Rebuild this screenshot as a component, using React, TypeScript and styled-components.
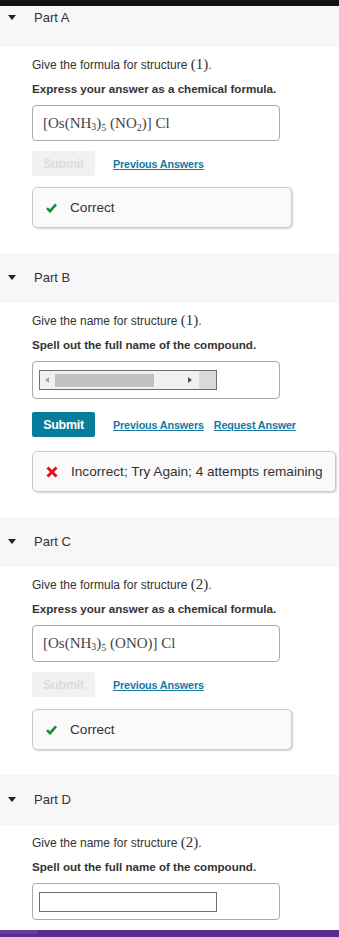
import React from "react";
import styled, { createGlobalStyle } from "styled-components";

const GlobalStyle = createGlobalStyle`
  html, body {
    margin: 0;
    padding: 0;
    background: #fff;
  }
  body {
    font-family: "Liberation Sans", Arial, sans-serif;
    color: #333;
    overflow: hidden;
  }
`;

const Page = styled.div`
  width: 339px;
  display: flex;
  flex-direction: column;
`;

const TopBar = styled.div`
  height: 6px;
  background: #121212;
`;

const Section = styled.section<{ $pb?: number }>`
  display: flex;
  flex-direction: column;
  padding-bottom: ${(p) => p.$pb ?? 25}px;
`;

const PartHeader = styled.div<{ $cut?: boolean }>`
  height: ${(p) => (p.$cut ? 41 : 50)}px;
  background: #f7f7f7;
  display: flex;
  align-items: ${(p) => (p.$cut ? "flex-start" : "center")};
  padding-top: ${(p) => (p.$cut ? 3 : 0)}px;
  box-sizing: border-box;
  padding-left: 8px;
  gap: 18px;
`;

const CaretWrap = styled.span`
  display: flex;
  height: 18px;
  align-items: center;
`;

const Caret = styled.span`
  width: 0;
  height: 0;
  border-left: 4.5px solid transparent;
  border-right: 4.5px solid transparent;
  border-top: 5px solid #222;
  margin-bottom: 1px;
`;

const PartTitle = styled.span`
  font-size: 13px;
  line-height: 18px;
  color: #333;
`;

const Body = styled.div`
  display: flex;
  flex-direction: column;
  align-items: flex-start;
  padding: 9px 0 0 32px;
`;

const Prompt = styled.p`
  margin: 0;
  font-size: 12px;
  line-height: 16px;
  color: #333;
`;

const Num = styled.span`
  font-family: "Liberation Serif", "Times New Roman", serif;
  font-size: 15px;
`;

const Instruction = styled.p`
  margin: 8px 0 0;
  font-size: 11.6px;
  line-height: 16px;
  font-weight: bold;
  color: #333;
`;

const AnswerBox = styled.div<{ $h?: number }>`
  margin-top: 8px;
  width: 248px;
  height: ${(p) => p.$h ?? 37}px;
  box-sizing: border-box;
  border: 1px solid #aaa;
  border-radius: 4px;
  background: #fff;
  display: flex;
  align-items: center;
  padding-left: 10px;
`;

const ChemFormula = styled.span`
  font-family: "Liberation Serif", "Times New Roman", serif;
  font-size: 15px;
  color: #444;
  sub {
    font-size: 10px;
    vertical-align: -2px;
    line-height: 0;
  }
  sub + sub {
    vertical-align: -3px;
  }
`;

const NameField = styled.div<{ $filled?: boolean }>`
  margin-left: -4px;
  width: 178px;
  height: 20px;
  box-sizing: border-box;
  border: 1px solid #6e6e6e;
  background: ${(p) => (p.$filled ? "#f0f0f0" : "#fff")};
  display: flex;
  align-items: center;
`;

const ScrollArrow = styled.span<{ $dir: "left" | "right"; $dim?: boolean }>`
  width: 0;
  height: 0;
  border-top: 3.5px solid transparent;
  border-bottom: 3.5px solid transparent;
  ${(p) =>
    p.$dir === "left"
      ? `border-right: 4px solid ${p.$dim ? "#a3a3a3" : "#505050"}; margin: 0 6px 0 5px;`
      : `border-left: 4px solid ${p.$dim ? "#a3a3a3" : "#505050"}; margin: 0 7px 0 0;`}
`;

const ScrollThumb = styled.span`
  width: 99px;
  height: 13px;
  background: #c1c1c1;
`;

const ScrollSpacer = styled.span`
  flex: 1;
`;

const ScrollCorner = styled.span`
  width: 17px;
  height: 18px;
  background: #dadada;
`;

const Actions = styled.div<{ $mt?: number }>`
  margin-top: ${(p) => p.$mt ?? 10}px;
  display: flex;
  align-items: center;
`;

const SubmitButton = styled.button<{ $active?: boolean }>`
  width: 63px;
  height: 25px;
  border: none;
  border-radius: 2px;
  font-family: "Liberation Sans", Arial, sans-serif;
  font-size: 12.5px;
  font-weight: bold;
  letter-spacing: -0.3px;
  padding: 0;
  background: ${(p) => (p.$active ? "#087d9b" : "#f1f1f1")};
  color: ${(p) => (p.$active ? "#fff" : "#dcdcdc")};
  margin-right: 18px;
`;

const LinkText = styled.a`
  font-size: 10.8px;
  font-weight: bold;
  letter-spacing: -0.15px;
  color: #1379a3;
  text-decoration: underline;
  margin-right: 10px;
  cursor: pointer;
`;

const Feedback = styled.div<{ $mt?: number }>`
  margin-top: ${(p) => p.$mt ?? 11}px;
  min-width: 260px;
  height: 41px;
  box-sizing: border-box;
  border: 1px solid #cbcbcb;
  border-radius: 5px;
  background: #fafafa;
  box-shadow: 1px 1px 2px rgba(0, 0, 0, 0.18);
  display: flex;
  align-items: center;
  padding: 0 12px 0 13px;
  gap: 13px;
`;

const FeedbackText = styled.span`
  font-size: 13.6px;
  color: #333;
`;

const BottomBar = styled.div`
  margin-top: 10px;
  height: 7px;
  background: #5a2a90;
  display: flex;
  align-items: flex-start;
`;

const BottomTab = styled.span`
  width: 38px;
  height: 4px;
  background: #6a3d9c;
  border-radius: 0 0 6px 0;
`;

const CheckIcon = () => (
  <svg width="11" height="10" viewBox="0 0 11 10">
    <path d="M1 5.2 L4 8.2 L10 1.4" fill="none" stroke="#1c8a3c" strokeWidth="2.6" />
  </svg>
);

const CrossIcon = () => (
  <svg width="12" height="12" viewBox="0 0 12 12">
    <path d="M1.5 1.5 L10.5 10.5 M10.5 1.5 L1.5 10.5" stroke="#e0161f" strokeWidth="3" />
  </svg>
);

const Formula1 = () => (
  <ChemFormula>
    [Os(NH<sub>3</sub>)<sub>5</sub> (NO<sub>2</sub>)] Cl
  </ChemFormula>
);

const Formula2 = () => (
  <ChemFormula>
    [Os(NH<sub>3</sub>)<sub>5</sub> (ONO)] Cl
  </ChemFormula>
);

function Header({ label, cut }: { label: string; cut?: boolean }) {
  return (
    <PartHeader $cut={cut}>
      <CaretWrap>
        <Caret />
      </CaretWrap>
      <PartTitle>{label}</PartTitle>
    </PartHeader>
  );
}

export default function App() {
  return (
    <>
      <GlobalStyle />
      <Page>
        <TopBar />

        <Section>
          <Header label="Part A" cut />
          <Body>
            <Prompt>
              Give the formula for structure <Num>(1)</Num>.
            </Prompt>
            <Instruction>Express your answer as a chemical formula.</Instruction>
            <AnswerBox $h={36}>
              <Formula1 />
            </AnswerBox>
            <Actions>
              <SubmitButton disabled>Submit</SubmitButton>
              <LinkText>Previous Answers</LinkText>
            </Actions>
            <Feedback>
              <CheckIcon />
              <FeedbackText>Correct</FeedbackText>
            </Feedback>
          </Body>
        </Section>

        <Section>
          <Header label="Part B" />
          <Body>
            <Prompt>
              Give the name for structure <Num>(1)</Num>.
            </Prompt>
            <Instruction>Spell out the full name of the compound.</Instruction>
            <AnswerBox $h={38}>
              <NameField $filled>
                <ScrollArrow $dir="left" $dim />
                <ScrollThumb />
                <ScrollSpacer />
                <ScrollArrow $dir="right" />
                <ScrollCorner />
              </NameField>
            </AnswerBox>
            <Actions $mt={13}>
              <SubmitButton $active>Submit</SubmitButton>
              <LinkText>Previous Answers</LinkText>
              <LinkText>Request Answer</LinkText>
            </Actions>
            <Feedback $mt={14}>
              <CrossIcon />
              <FeedbackText>Incorrect; Try Again; 4 attempts remaining</FeedbackText>
            </Feedback>
          </Body>
        </Section>

        <Section>
          <Header label="Part C" />
          <Body>
            <Prompt>
              Give the formula for structure <Num>(2)</Num>.
            </Prompt>
            <Instruction>Express your answer as a chemical formula.</Instruction>
            <AnswerBox>
              <Formula2 />
            </AnswerBox>
            <Actions>
              <SubmitButton disabled>Submit</SubmitButton>
              <LinkText>Previous Answers</LinkText>
            </Actions>
            <Feedback $mt={12}>
              <CheckIcon />
              <FeedbackText>Correct</FeedbackText>
            </Feedback>
          </Body>
        </Section>

        <Section $pb={0}>
          <Header label="Part D" />
          <Body>
            <Prompt>
              Give the name for structure <Num>(2)</Num>.
            </Prompt>
            <Instruction>Spell out the full name of the compound.</Instruction>
            <AnswerBox>
              <NameField />
            </AnswerBox>
          </Body>
        </Section>

        <BottomBar>
          <BottomTab />
        </BottomBar>
      </Page>
    </>
  );
}
